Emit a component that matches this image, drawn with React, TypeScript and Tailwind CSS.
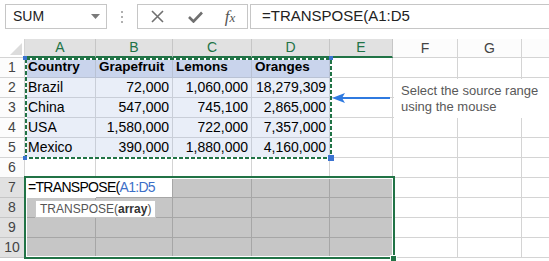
import React from "react";

const COLS = [
  { l: "A", w: 71, sel: true },
  { l: "B", w: 77, sel: true },
  { l: "C", w: 79, sel: true },
  { l: "D", w: 78, sel: true },
  { l: "E", w: 63, sel: true },
  { l: "F", w: 65, sel: false },
  { l: "G", w: 64, sel: false },
  { l: "", w: 40, sel: false },
];

const DATA: string[][] = [
  ["Country", "Grapefruit", "Lemons", "Oranges"],
  ["Brazil", "72,000", "1,060,000", "18,279,309"],
  ["China", "547,000", "745,100", "2,865,000"],
  ["USA", "1,580,000", "722,000", "7,357,000"],
  ["Mexico", "390,000", "1,880,000", "4,160,000"],
];

function Toolbar() {
  return (
    <div className="h-[39px] flex items-start pt-[4px] bg-white">
      <div className="ml-[5px] w-[102px] h-[25px] border border-[#c6c6c6] flex items-center justify-between pl-[7px] pr-[6px]">
        <span className="text-[14px] text-[#222]">SUM</span>
        <svg width="9" height="5" viewBox="0 0 9 5">
          <path d="M0 0 L9 0 L4.5 5 Z" fill="#7a7a7a" />
        </svg>
      </div>
      <div className="w-[30px] h-[25px] flex flex-col items-center justify-center gap-[3px]">
        <div className="w-[2px] h-[2px] bg-[#b0b0b0]" />
        <div className="w-[2px] h-[2px] bg-[#b0b0b0]" />
        <div className="w-[2px] h-[2px] bg-[#b0b0b0]" />
      </div>
      <div className="w-[111px] h-[25px] border border-[#c6c6c6] flex items-center">
        <div className="w-[39px] flex justify-center">
          <svg width="13" height="13" viewBox="0 0 13 13">
            <path d="M1 1 L12 12 M12 1 L1 12" stroke="#707070" strokeWidth="1.6" />
          </svg>
        </div>
        <div className="w-[36px] flex justify-center">
          <svg width="15" height="12" viewBox="0 0 15 12">
            <path d="M1 6 L5.5 10.5 L14 1.5" stroke="#707070" strokeWidth="2.6" fill="none" />
          </svg>
        </div>
        <div className="w-[34px] flex justify-center">
          <span className="font-['Liberation_Serif',serif] italic text-[17px] text-[#555] leading-none">
            f<span className="text-[13px]">x</span>
          </span>
        </div>
      </div>
      <div className="ml-[2px] flex-1 h-[25px] border border-r-0 border-[#c6c6c6] flex items-center pl-[11px]">
        <span className="text-[15px] text-[#222]">=TRANSPOSE(A1:D5</span>
      </div>
    </div>
  );
}

function HeaderRow() {
  return (
    <div className="flex h-[19px]">
      <div className="w-[25px] shrink-0 bg-white border-r border-b border-[#d4d4d4] relative overflow-hidden">
        <svg className="absolute right-[2px] bottom-[2px]" width="12" height="12" viewBox="0 0 12 12">
          <path d="M12 0 L12 12 L0 12 Z" fill="#dcdcdc" />
        </svg>
      </div>
      {COLS.map((c, i) => (
        <div
          key={i}
          style={{ width: c.w }}
          className={
            c.sel
              ? "shrink-0 bg-[#e1e1e1] border-r border-[#c6c6c6] border-b-2 border-b-[#217346] text-[#217346] flex items-center justify-center text-[14px]"
              : "shrink-0 bg-[#fcfcfc] border-r border-b border-[#d4d4d4] text-[#444] flex items-center justify-center text-[14px]"
          }
        >
          {c.l}
        </div>
      ))}
    </div>
  );
}

function Row({ n }: { n: number }) {
  const sel = n >= 7;
  return (
    <div className="flex h-[20px]">
      <div
        className={
          sel
            ? "w-[25px] shrink-0 bg-[#e1e1e1] border-r border-b border-[#c6c6c6] flex items-center justify-center text-[14px] text-[#444]"
            : "w-[25px] shrink-0 bg-[#fcfcfc] border-r border-b border-[#d4d4d4] flex items-center justify-center text-[14px] text-[#444]"
        }
      >
        {n}
      </div>
      {COLS.map((c, i) => {
        let cls = "shrink-0 border-r border-b flex items-center text-[14px] text-black px-[3px] overflow-visible whitespace-nowrap";
        let content: React.ReactNode = null;
        if (n <= 5 && i < 4) {
          cls += n === 1 ? " bg-[#c9d4ec] border-[#b9c2d4]" : " bg-[#e9eef8] border-[#c9ced8]";
          const v = DATA[n - 1][i];
          if (n === 1) {
            content = <span className="font-bold text-[13.5px]">{v}</span>;
          } else {
            content = v;
            if (i > 0) cls += " justify-end";
          }
        } else if (sel && i < 5) {
          if (n === 7 && i === 0) {
            cls += " bg-white border-white relative z-10";
            content = (
              <span className="text-[14px] tracking-[-0.7px]">
                =TRANSPOSE(<span className="text-[#3c6fc7]">A1:D5</span>
              </span>
            );
          } else if (n === 7 && i === 1) {
            cls += " bg-white border-b-[#a6a6a6] border-r-[#a6a6a6]";
          } else {
            cls += " bg-[#c6c6c6] border-[#a6a6a6]";
          }
        } else {
          cls += " bg-white border-[#d4d4d4]";
        }
        return (
          <div key={i} style={{ width: c.w }} className={cls}>
            {content}
          </div>
        );
      })}
    </div>
  );
}

export default function App() {
  return (
    <div className="w-[549px] h-[261px] bg-white relative overflow-hidden font-['Liberation_Sans',Arial,sans-serif]">
      <Toolbar />
      <div className="relative">
        <HeaderRow />
        {[1, 2, 3, 4, 5, 6, 7, 8, 9, 10].map((n) => (
          <Row key={n} n={n} />
        ))}

        {/* reference range highlight (blue) + marching ants */}
        <svg className="absolute left-[23px] top-[17px] pointer-events-none" width="312" height="106" viewBox="0 0 312 106">
          <rect x="2.5" y="2.5" width="306" height="100" fill="none" stroke="#3b73d1" strokeWidth="1" />
          <rect x="3" y="3" width="305" height="99" fill="none" stroke="#ffffff" strokeWidth="2" />
          <rect x="3" y="3" width="305" height="99" fill="none" stroke="#217346" strokeWidth="2" strokeDasharray="4 2" />
          <rect x="0" y="0" width="4" height="4" fill="#3b73d1" />
          <rect x="306" y="0" width="4" height="4" fill="#3b73d1" />
          <rect x="0" y="100" width="4" height="4" fill="#3b73d1" />
          <rect x="305" y="99" width="6" height="6" fill="#3b73d1" />
        </svg>

        {/* selection A7:E10 */}
        <div className="absolute left-[24px] top-[137px] w-[371px] h-[83px] border-2 border-[#217346] shadow-[inset_0_0_0_1px_#ffffff] pointer-events-none z-20" />
        <div className="absolute left-[390px] top-[216px] w-[7px] h-[7px] bg-[#217346] border border-white z-30" />

        {/* tooltip */}
        <div className="absolute left-[35px] top-[161px] h-[18px] px-[4px] bg-white border border-[#c8c8c8] flex items-center text-[12px] text-[#555] z-30 whitespace-nowrap">
          TRANSPOSE(<span className="font-bold text-[#333]">array</span>)
        </div>

        {/* annotation */}
        <svg className="absolute left-[332px] top-[53px] z-30" width="60" height="12" viewBox="0 0 60 12">
          <path d="M6 6 L58 6" stroke="#2f7ae0" strokeWidth="2" />
          <path d="M0 6 L13 1 L10 6 L13 11 Z" fill="#2f7ae0" />
        </svg>
        <div className="absolute left-[394px] top-[40px] w-[155px] h-[39px] bg-white z-30 pl-[7px] pt-[4px] text-[13px] leading-[16px] text-[#595959]">
          Select the source range
          <br />
          using the mouse
        </div>
      </div>
    </div>
  );
}
